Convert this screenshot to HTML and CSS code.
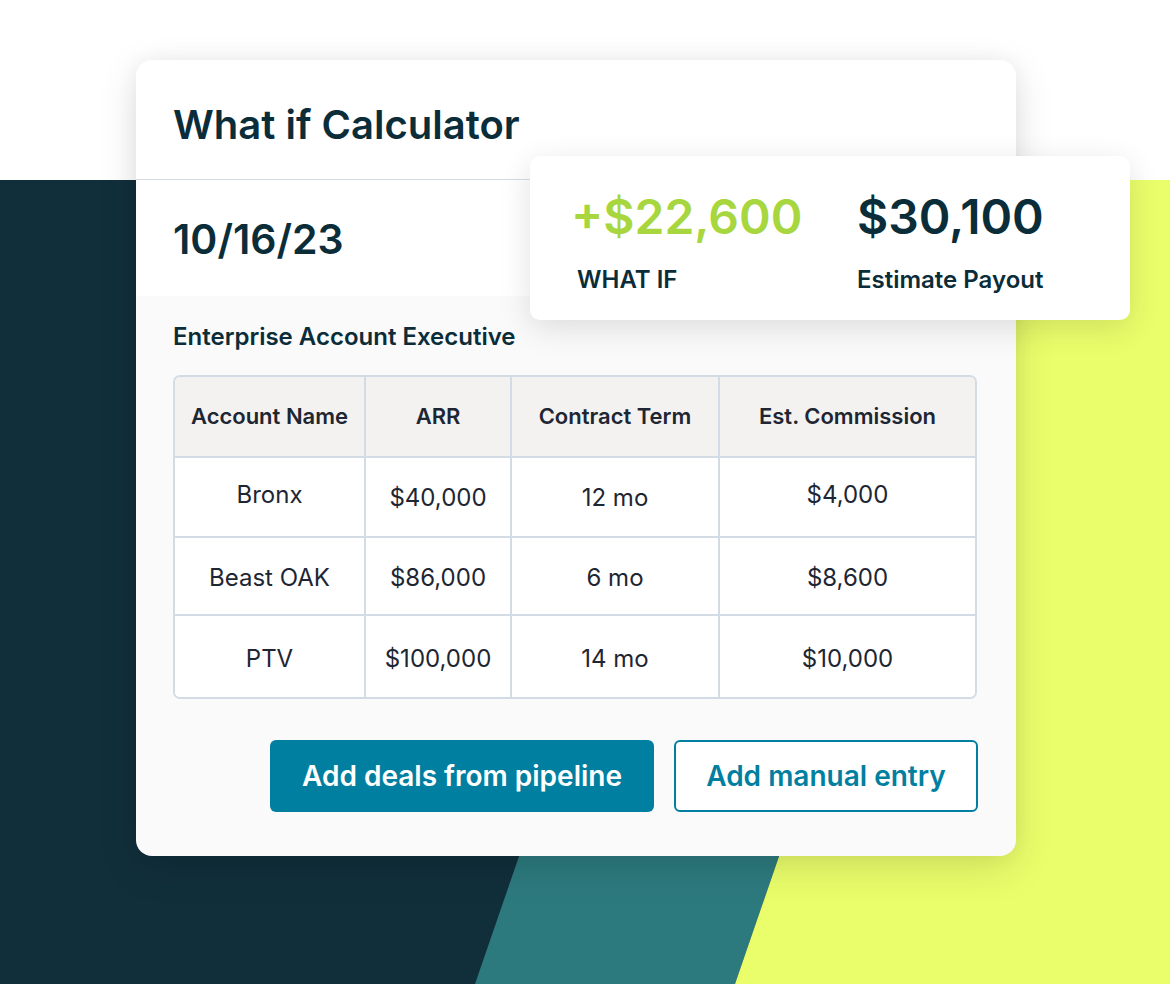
FILE: index.html
```html
<!DOCTYPE html>
<html lang="en">
<head>
<meta charset="utf-8">
<title>What if Calculator</title>
<link rel="stylesheet" href="styles.css">
</head>
<body>
<div class="stage">
  <div class="backdrop" aria-hidden="true">
    <svg width="1170" height="804" viewBox="0 0 1170 804">
      <rect x="0" y="0" width="1170" height="804" fill="#112f3b"/>
      <polygon points="752,0 1012,0 735,804 475,804" fill="#2d7a7e"/>
      <polygon points="1012,0 1170,0 1170,804 735,804" fill="#eafe6b"/>
    </svg>
  </div>

  <section class="card">
    <header class="card-head">
      <h1 class="title">What if Calculator</h1>
    </header>
    <div class="card-date">10/16/23</div>
    <div class="card-body">
      <h2 class="role">Enterprise Account Executive</h2>
      <div class="grid">
        <div class="cell head">Account Name</div>
        <div class="cell head">ARR</div>
        <div class="cell head">Contract Term</div>
        <div class="cell head last-col">Est. Commission</div>

        <div class="cell r1 up">Bronx</div>
        <div class="cell r1">$40,000</div>
        <div class="cell r1">12 mo</div>
        <div class="cell r1 last-col up">$4,000</div>

        <div class="cell r2">Beast OAK</div>
        <div class="cell r2">$86,000</div>
        <div class="cell r2">6 mo</div>
        <div class="cell r2 last-col">$8,600</div>

        <div class="cell r3 last-row">PTV</div>
        <div class="cell r3 last-row">$100,000</div>
        <div class="cell r3 last-row">14 mo</div>
        <div class="cell r3 last-row last-col">$10,000</div>
      </div>
      <div class="actions">
        <button class="btn btn-primary">Add deals from pipeline</button>
        <button class="btn btn-outline">Add manual entry</button>
      </div>
    </div>
  </section>

  <aside class="summary">
    <div class="stat stat-whatif">
      <div class="stat-value green">+$22,600</div>
      <div class="stat-label indent">WHAT IF</div>
    </div>
    <div class="stat">
      <div class="stat-value">$30,100</div>
      <div class="stat-label">Estimate Payout</div>
    </div>
  </aside>
</div>
</body>
</html>
```

FILE: styles.css
```css
* { box-sizing: border-box; }

html, body {
  margin: 0;
  padding: 0;
  background: #ffffff;
}

body {
  width: 1170px;
  height: 984px;
  overflow: hidden;
  font-family: Inter, "Noto Sans", "Liberation Sans", sans-serif;
  color: #0b2d39;
}

.stage {
  position: relative;
  width: 1170px;
  height: 984px;
  padding: 60px 0 0 136px;
}

.backdrop {
  position: absolute;
  left: 0;
  top: 180px;
  width: 1170px;
  height: 804px;
  z-index: 0;
}

.backdrop svg { display: block; }

.card {
  position: relative;
  z-index: 1;
  width: 880px;
  height: 796px;
  border-radius: 16px;
  background: #fafafa;
  overflow: hidden;
  box-shadow: 0 12px 40px rgba(0, 0, 0, 0.12), 0 0 20px rgba(0, 0, 0, 0.05);
}

.card-head {
  height: 120px;
  background: #ffffff;
  border-bottom: 1px solid #d3dce5;
  padding: 45px 37px 0;
}

.title {
  margin: 0;
  font-size: 40px;
  line-height: 1;
  font-weight: 600;
  color: #0b2d39;
}

.card-date {
  height: 116px;
  background: #ffffff;
  padding: 39px 37px 0;
  font-size: 41px;
  line-height: 1;
  font-weight: 600;
  color: #0b2d39;
}

.card-body {
  padding: 29px 38px 0 37px;
}

.role {
  margin: 0 0 26px;
  font-size: 24px;
  line-height: 1;
  font-weight: 600;
  color: #0b2d39;
}

.grid {
  width: 804px;
  display: grid;
  grid-template-columns: 191px 146px 208px 255px;
  grid-template-rows: 81px 80px 78px 81px;
  border: 2px solid #d3dce6;
  border-radius: 7px;
  overflow: hidden;
  background: #ffffff;
}

.cell {
  display: flex;
  align-items: center;
  justify-content: center;
  border-right: 2px solid #d3dce6;
  border-bottom: 2px solid #d3dce6;
  font-size: 24px;
  font-weight: 400;
  color: #1e2633;
  background: #ffffff;
}

.cell.head {
  background: #f3f2f0;
  font-size: 22px;
  font-weight: 600;
  padding-bottom: 2px;
}

.cell.up { padding-bottom: 6px; }
.cell.r2, .cell.r3 { padding-top: 3px; }

.cell.last-col { border-right: none; }
.cell.last-row { border-bottom: none; }

.actions {
  display: flex;
  justify-content: flex-end;
  gap: 20px;
  margin-top: 41px;
}

.btn {
  height: 72px;
  border-radius: 6px;
  font-family: inherit;
  font-size: 28px;
  font-weight: 600;
  cursor: pointer;
}

.btn-primary {
  width: 384px;
  background: #017fa0;
  color: #ffffff;
  border: none;
}

.btn-outline {
  width: 304px;
  background: #ffffff;
  color: #017fa0;
  border: 2px solid #017fa0;
}

.summary {
  position: absolute;
  z-index: 2;
  left: 530px;
  top: 156px;
  width: 600px;
  height: 164px;
  border-radius: 10px;
  background: #ffffff;
  box-shadow: 0 8px 32px rgba(0, 0, 0, 0.12);
  display: flex;
  padding: 37px 0 0 41px;
}

.stat-whatif { width: 286px; }

.stat-value {
  font-size: 48px;
  line-height: 1;
  font-weight: 600;
  color: #0b2d39;
}

.stat-value.green { color: #a7d63e; }

.stat-label {
  margin-top: 27px;
  font-size: 24px;
  line-height: 1;
  font-weight: 600;
  color: #0b2d39;
}

.stat-label.indent { padding-left: 6px; }
```
